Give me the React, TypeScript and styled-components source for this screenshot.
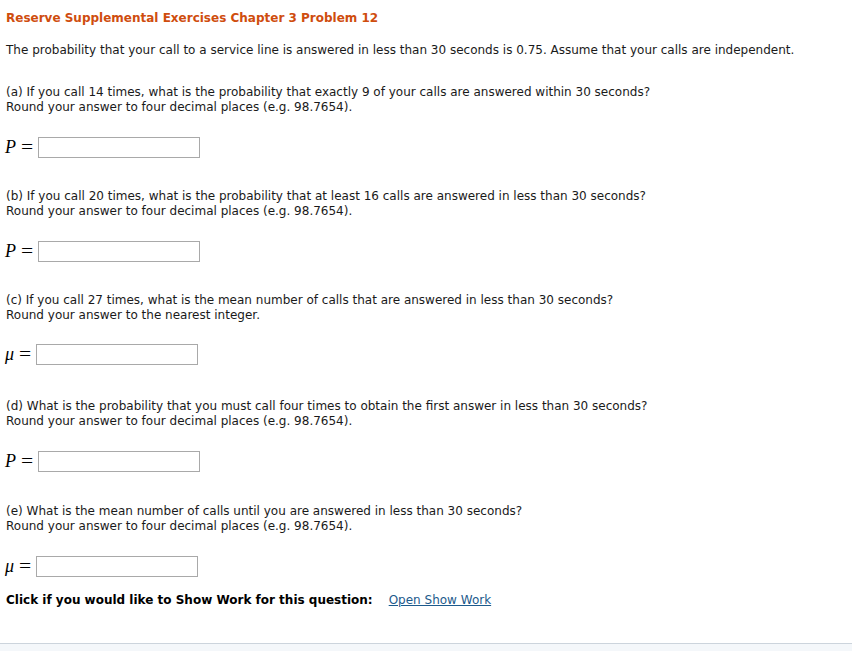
import React from "react";
import styled, { createGlobalStyle } from "styled-components";

const Global = createGlobalStyle`
  html, body { margin: 0; padding: 0; background: #ffffff; }
  body { font-family: "DejaVu Sans", Verdana, sans-serif; font-size: 12px; color: #1a1a1a; }
`;

const Page = styled.div`
  width: 852px;
  height: 651px;
  display: flex;
  flex-direction: column;
  overflow: hidden;
`;

const Content = styled.div`
  padding: 10px 6px 0 6px;
  flex: 1;
`;

const Title = styled.h1`
  margin: 0;
  font-size: 12px;
  font-weight: bold;
  color: #cf4d0e;
  line-height: 16px;
`;

const Intro = styled.p`
  margin: 17px 0 0 0;
  line-height: 15px;
`;

const Part = styled.div<{ $gap: number }>`
  margin-top: ${(p) => p.$gap}px;
`;

const Question = styled.p`
  margin: 0;
  line-height: 15px;
`;

const AnswerRow = styled.div<{ $gap: number }>`
  display: flex;
  align-items: center;
  margin-top: ${(p) => p.$gap}px;
  height: 21px;
`;

const MathLabel = styled.span`
  font-family: "Liberation Serif", "Times New Roman", serif;
  font-size: 18px;
  display: flex;
  align-items: center;
  margin-left: -1px;
  margin-right: 5px;
  color: #000;
`;

const Var = styled.i`
  font-style: italic;
  margin-right: 5px;
`;

const Eq = styled.span`
  display: inline-block;
  width: 12px;
  transform: scaleX(1.2);
  transform-origin: left center;
`;

const Input = styled.input`
  width: 160px;
  height: 19px;
  box-sizing: content-box;
  padding: 0;
  border: 1px solid #a9a9a9;
  margin: 0;
`;

const Footer = styled.div`
  margin-top: 16px;
  display: flex;
  align-items: center;
  line-height: 15px;
`;

const Bold = styled.span`
  font-weight: bold;
  color: #000;
`;

const Link = styled.a`
  margin-left: 16px;
  color: #1c5a8c;
  text-decoration: underline;
`;

const BottomBar = styled.div`
  height: 7px;
  border-top: 1px solid #ccd4dc;
  background: #f4f7fa;
`;

const parts = [
  {
    q: "(a) If you call 14 times, what is the probability that exactly 9 of your calls are answered within 30 seconds?",
    r: "Round your answer to four decimal places (e.g. 98.7654).",
    v: "P",
    gap: 27,
    rowGap: 22,
  },
  {
    q: "(b) If you call 20 times, what is the probability that at least 16 calls are answered in less than 30 seconds?",
    r: "Round your answer to four decimal places (e.g. 98.7654).",
    v: "P",
    gap: 31,
    rowGap: 22,
  },
  {
    q: "(c) If you call 27 times, what is the mean number of calls that are answered in less than 30 seconds?",
    r: "Round your answer to the nearest integer.",
    v: "μ",
    gap: 31,
    rowGap: 21,
  },
  {
    q: "(d) What is the probability that you must call four times to obtain the first answer in less than 30 seconds?",
    r: "Round your answer to four decimal places (e.g. 98.7654).",
    v: "P",
    gap: 34,
    rowGap: 22,
  },
  {
    q: "(e) What is the mean number of calls until you are answered in less than 30 seconds?",
    r: "Round your answer to four decimal places (e.g. 98.7654).",
    v: "μ",
    gap: 32,
    rowGap: 22,
  },
];

export default function App() {
  return (
    <Page>
      <Global />
      <Content>
        <Title>Reserve Supplemental Exercises Chapter 3 Problem 12</Title>
        <Intro>
          The probability that your call to a service line is answered in less than 30 seconds is 0.75. Assume that your calls are independent.
        </Intro>
        {parts.map((p, i) => (
          <Part key={i} $gap={p.gap}>
            <Question>
              {p.q}
              <br />
              {p.r}
            </Question>
            <AnswerRow $gap={p.rowGap}>
              <MathLabel>
                <Var>{p.v}</Var>
                <Eq>=</Eq>
              </MathLabel>
              <Input type="text" />
            </AnswerRow>
          </Part>
        ))}
        <Footer>
          <Bold>Click if you would like to Show Work for this question:</Bold>
          <Link href="#">Open Show Work</Link>
        </Footer>
      </Content>
      <BottomBar />
    </Page>
  );
}
